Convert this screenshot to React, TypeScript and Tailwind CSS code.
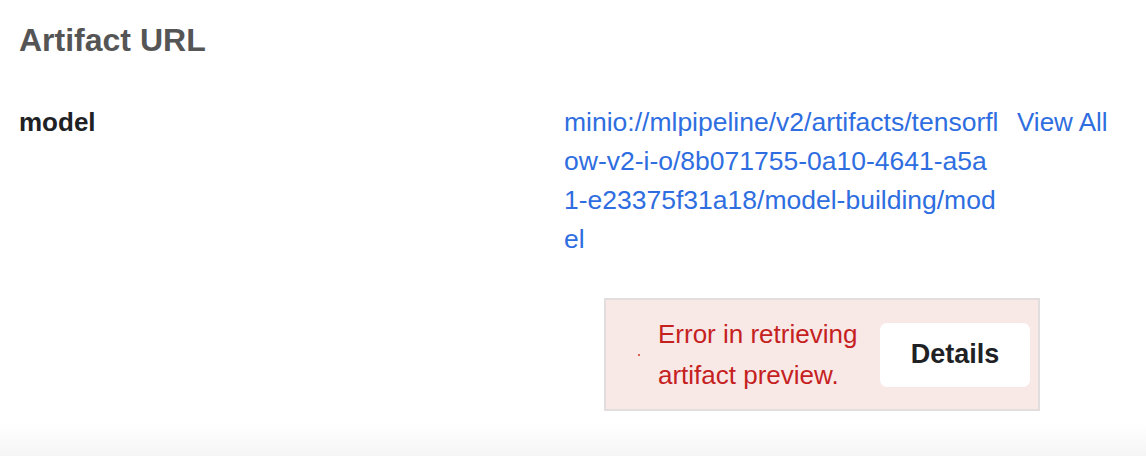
export default function App() {
  const urlLines = [
    'minio://mlpipeline/v2/artifacts/tensorfl',
    'ow-v2-i-o/8b071755-0a10-4641-a5a',
    '1-e23375f31a18/model-building/mod',
    'el',
  ];

  return (
    <div className="w-full h-[456px] bg-white flex flex-col overflow-hidden font-['Liberation_Sans',Arial,sans-serif]">
      <h1 className="pt-[20px] px-[19px] text-[32px] leading-[40px] font-bold text-[#555555]">Artifact URL</h1>

      <div className="mt-[43px] flex">
        <div className="w-[564px] pl-[19px] text-[26px] leading-[39px] font-bold text-[#202124]">model</div>
        <div className="flex flex-col">
          <div className="flex items-start">
            <a href="#" className="w-[453px] text-[26.5px] leading-[39px] text-[#2f6ee0]">
              {urlLines.map((l) => (
                <span key={l} className="block whitespace-nowrap">{l}</span>
              ))}
            </a>
            <a href="#" className="text-[26px] leading-[39px] text-[#2f6ee0] whitespace-nowrap">View All</a>
          </div>

          <div className="mt-[39px] ml-[40px] w-[436px] h-[113px] border-2 border-[#e2dede] bg-[#f8e9e7] flex items-center">
            <span className="ml-[32px] w-[2px] h-[2px] rounded-full bg-[#d93025]" />
            <div className="ml-[18px] w-[197px] text-[26px] leading-[41px] text-[#c5221f]">
              <div className="whitespace-nowrap">Error in retrieving</div>
              <div className="whitespace-nowrap">artifact preview.</div>
            </div>
            <button className="ml-[25px] w-[150px] h-[64px] rounded-[7px] bg-white text-[27px] font-bold text-[#202124]">
              Details
            </button>
          </div>
        </div>
      </div>

      <div className="mt-auto h-[32px] bg-gradient-to-b from-white to-[#f5f5f5]" />
    </div>
  );
}
